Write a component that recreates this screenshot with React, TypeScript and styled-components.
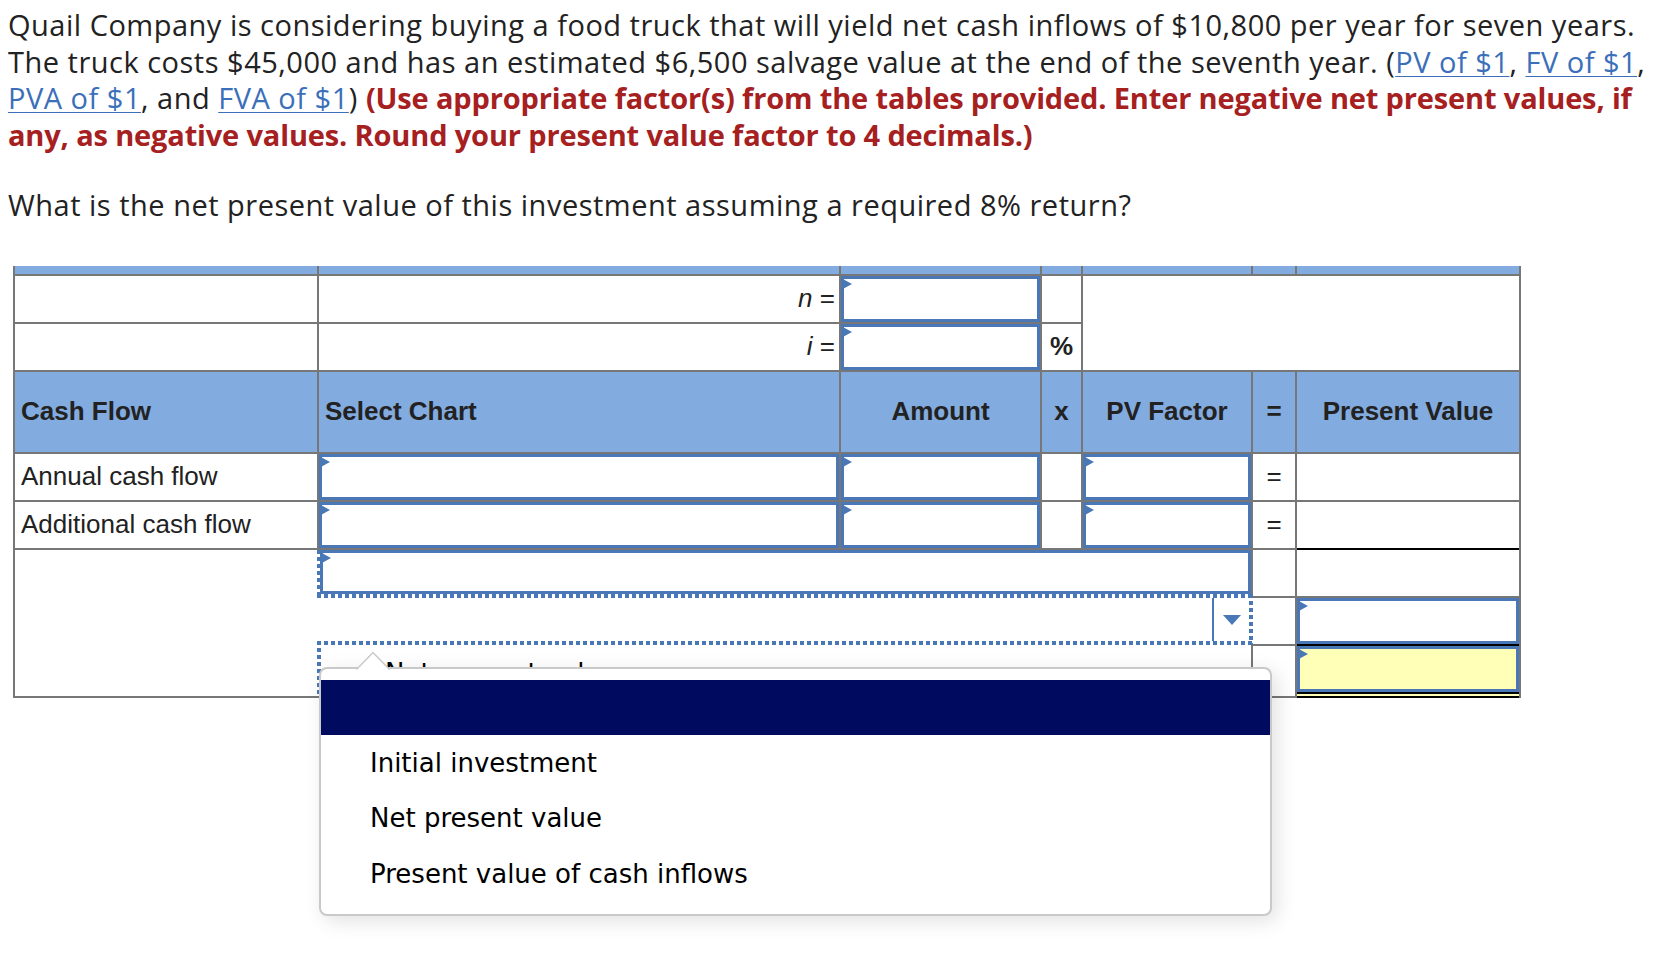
import React from "react";
import styled, { createGlobalStyle } from "styled-components";

const GlobalStyle = createGlobalStyle`
  body {
    margin: 7px 8px 8px;
    background: #fff;
    color: #222;
    font-family: "Open Sans", Lato, "Liberation Sans", sans-serif;
  }
`;

const BLUE = "#4a77b6";
const HEAD = "#82abdf";
const LINE = "#777";

const Page = styled.div`
  min-height: 940px;
`;

const Prompt = styled.p`
  margin: 0;
  font-size: 29px;
  line-height: 36.5px;
  letter-spacing: 0.5px;
  white-space: nowrap;
`;

const Question = styled(Prompt)`
  margin-top: 34px;
`;

const Ref = styled.a`
  color: #3b6fba;
  text-decoration: underline;
  text-decoration-thickness: 1px;
  text-underline-offset: 3px;
  cursor: pointer;
`;

const Note = styled.strong`
  color: #a5201f;
  font-weight: 700;
  letter-spacing: -0.15px;
`;

const Sheet = styled.div`
  position: relative;
  display: grid;
  box-sizing: border-box;
  width: 1508px;
  margin: 42px 0 0 5px;
  padding: 0 2px 2px;
  gap: 2px;
  grid-template-columns: 302px 520px 199px 39px 168px 42px 222px;
  grid-template-rows: 8px 46px 46px 80px 46px 46px 46px 46px 50px;
  background: ${LINE};
  font-family: "Liberation Sans", Arial, sans-serif;
  font-size: 26px;
  color: #222;
`;

type Place = { $col: string; $row: string };

const Strip = styled.div<Place>`
  grid-column: ${p => p.$col};
  grid-row: ${p => p.$row};
  background: ${HEAD};
`;

const HeadCell = styled.div<Place & { $center?: boolean }>`
  grid-column: ${p => p.$col};
  grid-row: ${p => p.$row};
  background: ${HEAD};
  display: flex;
  align-items: center;
  justify-content: ${p => (p.$center ? "center" : "flex-start")};
  padding: 0 6px;
  font-weight: 700;
`;

const Cell = styled.div<Place & { $align?: "left" | "center" | "right"; $bold?: boolean }>`
  grid-column: ${p => p.$col};
  grid-row: ${p => p.$row};
  background: #fff;
  display: flex;
  align-items: center;
  justify-content: ${p =>
    p.$align === "center" ? "center" : p.$align === "right" ? "flex-end" : "flex-start"};
  padding: 0 ${p => (p.$align === "right" ? "4px" : "6px")};
  font-weight: ${p => (p.$bold ? 700 : 400)};
`;

const Slot = styled.div<Place>`
  grid-column: ${p => p.$col};
  grid-row: ${p => p.$row};
  display: flex;
  flex-direction: column;
  background: #fff;
`;

const TotalSlot = styled(Slot)<{ $edge: "top" | "bottom" | "double" }>`
  ${p => (p.$edge === "top" ? "margin-top: -2px; border-top: 2px solid #000;" : "")}
  ${p => (p.$edge === "bottom" ? "margin-bottom: -2px; border-bottom: 2px solid #000;" : "")}
  ${p =>
    p.$edge === "double"
      ? "margin-bottom: -2px; border-bottom: 6px double #000; background: #ffffb7;"
      : ""}
`;

const Field = styled.div<{ $yellow?: boolean }>`
  position: relative;
  flex: 1;
  box-sizing: border-box;
  border: 3px solid ${BLUE};
  background: ${p => (p.$yellow ? "#ffffb7" : "#fff")};

  &::before {
    content: "";
    position: absolute;
    left: -3px;
    top: -1px;
    border-left: 11px solid ${BLUE};
    border-top: 6px solid transparent;
    border-bottom: 6px solid transparent;
  }
`;

const dots = (dir: string) =>
  `repeating-linear-gradient(${dir}, ${BLUE} 0 4px, transparent 4px 7px)`;

const ChartStack = styled.div`
  grid-column: 2 / 6;
  grid-row: 7 / 10;
  margin-left: -2px;
  padding-left: 3px;
  position: relative;
  display: flex;
  flex-direction: column;
  background: #fff ${dots("180deg")} 0 0 / 4px 100% no-repeat;
`;

const ChartField = styled(Field)`
  flex: none;
  height: 44px;
`;

const Dropdown = styled.div`
  height: 51px;
  margin-left: -3px;
  width: calc(100% + 5px);
  box-sizing: border-box;
  padding: 4px;
  display: flex;
  justify-content: flex-end;
  background:
    ${dots("90deg")} 0 0 / 100% 4px no-repeat,
    ${dots("90deg")} 0 100% / 100% 4px no-repeat,
    ${dots("180deg")} 100% 0 / 4px 100% no-repeat,
    #fff;
`;

const Toggle = styled.div`
  width: 35px;
  border-left: 2px solid ${BLUE};
  display: flex;
  align-items: center;
  justify-content: center;
  padding-top: 1px;
`;

const Peek = styled.span`
  position: absolute;
  left: 68px;
  top: 110px;
  font-family: "DejaVu Sans", sans-serif;
  font-size: 26px;
  line-height: 1;
  color: #000;
  z-index: 1;
`;

const Menu = styled.div`
  position: absolute;
  left: 2px;
  top: 117px;
  z-index: 5;
  width: 953px;
  height: 249px;
  box-sizing: border-box;
  padding: 11px 0 12px;
  border: 2px solid #c9c9c9;
  border-radius: 8px;
  background: #fff;
  box-shadow: 5px 5px 20px rgba(0, 0, 0, 0.12);
  font-family: "DejaVu Sans", sans-serif;
  font-size: 26px;
  color: #000;
`;

const Caret = styled.svg`
  position: absolute;
  left: 35px;
  top: -18px;
`;

const Option = styled.div<{ $active?: boolean }>`
  height: 55.5px;
  display: flex;
  align-items: center;
  padding-left: 49px;
  background: ${p => (p.$active ? "#000b5f" : "transparent")};
  color: ${p => (p.$active ? "#fff" : "#000")};
`;

const options = ["", "Initial investment", "Net present value", "Present value of cash inflows"];

export default function App() {
  return (
    <Page>
      <GlobalStyle />
      <Prompt>
        Quail Company is considering buying a food truck that will yield net cash inflows of $10,800 per year for seven years.
        <br />
        The truck costs $45,000 and has an estimated $6,500 salvage value at the end of the seventh year. (
        <Ref>PV of $1</Ref>, <Ref>FV of $1</Ref>,
        <br />
        <Ref>PVA of $1</Ref>, and <Ref>FVA of $1</Ref>){" "}
        <Note>
          (Use appropriate factor(s) from the tables provided. Enter negative net present values, if
          <br />
          any, as negative values. Round your present value factor to 4 decimals.)
        </Note>
      </Prompt>
      <Question>What is the net present value of this investment assuming a required 8% return?</Question>

      <Sheet>
        {[1, 2, 3, 4, 5, 6, 7].map(c => (
          <Strip key={c} $col={`${c}`} $row="1" />
        ))}

        <Cell $col="1" $row="2" />
        <Cell $col="2" $row="2" $align="right">
          <span>
            <i>n</i> =
          </span>
        </Cell>
        <Slot $col="3" $row="2">
          <Field />
        </Slot>
        <Cell $col="4" $row="2" />
        <Cell $col="5 / 8" $row="2 / 4" />

        <Cell $col="1" $row="3" />
        <Cell $col="2" $row="3" $align="right">
          <span>
            <i>i</i> =
          </span>
        </Cell>
        <Slot $col="3" $row="3">
          <Field />
        </Slot>
        <Cell $col="4" $row="3" $align="center" $bold>
          %
        </Cell>

        <HeadCell $col="1" $row="4">Cash Flow</HeadCell>
        <HeadCell $col="2" $row="4">Select Chart</HeadCell>
        <HeadCell $col="3" $row="4" $center>Amount</HeadCell>
        <HeadCell $col="4" $row="4" $center>x</HeadCell>
        <HeadCell $col="5" $row="4" $center>PV Factor</HeadCell>
        <HeadCell $col="6" $row="4" $center>=</HeadCell>
        <HeadCell $col="7" $row="4" $center>Present Value</HeadCell>

        {["Annual cash flow", "Additional cash flow"].map((label, i) => {
          const row = `${5 + i}`;
          return (
            <React.Fragment key={label}>
              <Cell $col="1" $row={row}>{label}</Cell>
              <Slot $col="2" $row={row}>
                <Field />
              </Slot>
              <Slot $col="3" $row={row}>
                <Field />
              </Slot>
              <Cell $col="4" $row={row} />
              <Slot $col="5" $row={row}>
                <Field />
              </Slot>
              <Cell $col="6" $row={row} $align="center">=</Cell>
              <Cell $col="7" $row={row} />
            </React.Fragment>
          );
        })}

        <Cell $col="1" $row="7 / 10" />
        <ChartStack>
          <ChartField />
          <Dropdown>
            <Toggle>
              <svg width="20" height="10" viewBox="0 0 20 10">
                <polygon points="1,0 19,0 10,10" fill={BLUE} />
              </svg>
            </Toggle>
          </Dropdown>
          <Peek>Net present value</Peek>
          <Menu>
            <Caret width="34" height="19" viewBox="0 0 34 19">
              <polygon points="0,19 17,1 34,19" fill="#fff" />
              <polyline points="0.5,18.5 17,1.5 33.5,18.5" fill="none" stroke="#c9c9c9" strokeWidth="1.5" />
            </Caret>
            {options.map((o, i) => (
              <Option key={i} $active={i === 0}>
                {o}
              </Option>
            ))}
          </Menu>
        </ChartStack>

        <Cell $col="6" $row="7" />
        <Cell $col="6" $row="8" />
        <Cell $col="6" $row="9" />
        <TotalSlot $col="7" $row="7" $edge="top" />
        <TotalSlot $col="7" $row="8" $edge="bottom">
          <Field />
        </TotalSlot>
        <TotalSlot $col="7" $row="9" $edge="double">
          <Field $yellow />
        </TotalSlot>
      </Sheet>
    </Page>
  );
}
